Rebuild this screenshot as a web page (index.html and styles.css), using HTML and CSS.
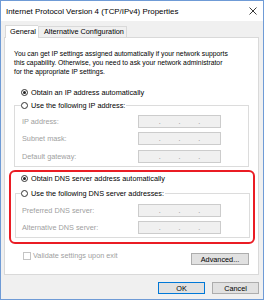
FILE: index.html
```html
<!DOCTYPE html>
<html>
<head>
<meta charset="utf-8">
<link rel="stylesheet" href="styles.css">
</head>
<body>
<div class="window">
  <div class="titlebar">
    <span class="title">Internet Protocol Version 4 (TCP/IPv4) Properties</span>
    <svg class="close" width="8" height="8" viewBox="0 0 8 8"><path d="M0.5 0.5L7.5 7.5M7.5 0.5L0.5 7.5" stroke="#222" stroke-width="0.9" fill="none"/></svg>
  </div>
  <div class="body">
    <div class="tabs">
      <div class="tab active">General</div>
      <div class="tab">Alternative Configuration</div>
    </div>
    <div class="panel">
      <p class="intro">You can get IP settings assigned automatically if your network supports<br>this capability. Otherwise, you need to ask your network administrator<br>for the appropriate IP settings.</p>

      <div class="ipsec">
        <div class="radio"><span class="dot checked"></span>Obtain an IP address automatically</div>
        <fieldset class="group">
          <legend class="radio"><span class="dot"></span>Use the following IP address:</legend>
          <div class="row"><span class="lbl">IP address:</span><span class="ipbox"><i>.</i><i>.</i><i>.</i></span></div>
          <div class="row"><span class="lbl">Subnet mask:</span><span class="ipbox"><i>.</i><i>.</i><i>.</i></span></div>
          <div class="row"><span class="lbl">Default gateway:</span><span class="ipbox"><i>.</i><i>.</i><i>.</i></span></div>
        </fieldset>
      </div>

      <div class="dnssec">
        <div class="radio"><span class="dot checked"></span>Obtain DNS server address automatically</div>
        <fieldset class="group">
          <legend class="radio"><span class="dot"></span>Use the following DNS server addresses:</legend>
          <div class="row"><span class="lbl">Preferred DNS server:</span><span class="ipbox"><i>.</i><i>.</i><i>.</i></span></div>
          <div class="row"><span class="lbl">Alternative DNS server:</span><span class="ipbox"><i>.</i><i>.</i><i>.</i></span></div>
        </fieldset>
      </div>

      <div class="footrow">
        <div class="check"><span class="box"></span>Validate settings upon exit</div>
        <div class="btn adv">Advanced...</div>
      </div>
    </div>
    <div class="actions">
      <div class="btn ok">OK</div>
      <div class="btn">Cancel</div>
    </div>
  </div>
</div>
</body>
</html>
```

FILE: styles.css
```css
html, body {
  margin: 0;
  padding: 0;
}
body {
  width: 264px;
  height: 300px;
  overflow: hidden;
  font-family: "Liberation Sans", Arial, sans-serif;
  font-size: 7.3px;
  color: #000;
}
.window {
  box-sizing: border-box;
  width: 264px;
  height: 300px;
  border: 1px solid #6f9bd6;
  background: #f0f0f0;
  display: flex;
  flex-direction: column;
}
.titlebar {
  height: 20px;
  background: #fff;
  display: flex;
  align-items: center;
  justify-content: space-between;
  padding: 0 6px 0 5px;
  flex: none;
}
.title {
  font-size: 7.9px;
  color: #000;
}
.close {
  display: block;
}
.body {
  padding: 4px 4px 0 3px;
  display: flex;
  flex-direction: column;
  flex: 1;
}
.tabs {
  display: flex;
  align-items: flex-end;
  height: 12px;
  padding-left: 1px;
  position: relative;
  z-index: 1;
  flex: none;
}
.tab {
  height: 10px;
  line-height: 10px;
  padding: 0 2px 0 5px;
  border: 1px solid #d9d9d9;
  border-bottom: none;
  background: #f0f0f0;
  white-space: nowrap;
}
.tab.active {
  height: 12px;
  line-height: 12px;
  background: #fff;
  padding: 0 3px 0 4px;
  width: 25px;
  margin-bottom: -1px;
  border-right: none;
}
.tab + .tab {
  border-left: 1px solid #d9d9d9;
}
.panel {
  background: #fff;
  border: 1px solid #d9d9d9;
  height: 238px;
  flex: none;
  box-sizing: border-box;
  padding: 11px 9px 0 9px;
  display: flex;
  flex-direction: column;
}
.intro {
  margin: 0;
  font-size: 6.8px;
  line-height: 9.2px;
  white-space: nowrap;
}
.radio {
  display: flex;
  align-items: center;
  height: 12px;
  white-space: nowrap;
}
.dot {
  box-sizing: border-box;
  width: 7px;
  height: 7px;
  border: 1px solid #333;
  border-radius: 50%;
  background: #fff;
  margin-right: 3px;
  flex: none;
  display: flex;
  align-items: center;
  justify-content: center;
}
.dot.checked::after {
  content: "";
  width: 3px;
  height: 3px;
  border-radius: 50%;
  background: #222;
}
.ipsec {
  margin-top: 10px;
  display: flex;
  flex-direction: column;
  gap: 1px;
  flex: none;
}
.ipsec > .radio {
  padding-left: 7px;
}
.group {
  margin: 0;
  border: 1px solid #dcdcdc;
  padding: 3px 27px 3px 7px;
  display: flex;
  flex-direction: column;
  gap: 4.5px;
  min-width: 0;
}
.group legend {
  padding: 0 1px 0 0;
  margin-left: -1px;
}
.row {
  display: flex;
  align-items: center;
  justify-content: space-between;
  height: 13px;
}
.lbl {
  color: #a0a0a0;
}
.ipbox {
  box-sizing: border-box;
  width: 83px;
  height: 13px;
  border: 1px solid #cccccc;
  background: #f0f0f0;
  display: flex;
  justify-content: space-evenly;
  align-items: flex-end;
  padding: 0 2px 2px 2px;
}
.ipbox i {
  font-style: normal;
  color: #888;
  line-height: 7px;
  font-size: 7px;
}
.dnssec {
  margin: 3px -6px 0 -5px;
  border: 2px solid #ea1c24;
  border-radius: 6px;
  padding: 1px 3px 4px 4px;
  display: flex;
  flex-direction: column;
  gap: 3px;
  flex: none;
}
.dnssec > .radio {
  padding-left: 6px;
}
.dnssec .group {
  padding: 4px 28px 3px 6px;
}
.footrow {
  display: flex;
  align-items: flex-start;
  justify-content: space-between;
  margin-top: 7px;
  flex: none;
}
.check {
  display: flex;
  align-items: center;
  height: 9px;
  margin-left: 9px;
  color: #a0a0a0;
}
.box {
  box-sizing: border-box;
  width: 8px;
  height: 8px;
  border: 1px solid #c4c4c4;
  background: #fff;
  margin-right: 2px;
}
.btn {
  box-sizing: border-box;
  height: 12px;
  border: 1px solid #adadad;
  background: #e1e1e1;
  display: flex;
  align-items: center;
  justify-content: center;
  width: 47px;
}
.btn.adv {
  width: 58px;
  margin-top: 2px;
}
.btn.ok {
  border-color: #0078d7;
}
.actions {
  display: flex;
  justify-content: flex-end;
  gap: 7px;
  padding-top: 7px;
  flex: none;
}
```
